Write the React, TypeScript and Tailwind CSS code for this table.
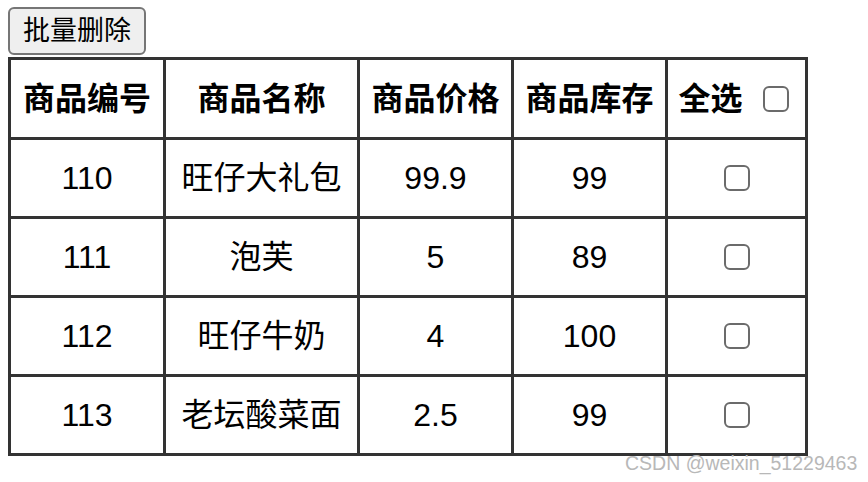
import { useState } from "react"

interface Goods {
  id: number
  name: string
  price: string
  stock: number
}

const initialGoods: Goods[] = [
  { id: 110, name: "旺仔大礼包", price: "99.9", stock: 99 },
  { id: 111, name: "泡芙", price: "5", stock: 89 },
  { id: 112, name: "旺仔牛奶", price: "4", stock: 100 },
  { id: 113, name: "老坛酸菜面", price: "2.5", stock: 99 },
]

function Box({ checked, onChange }: { checked: boolean; onChange: () => void }) {
  return (
    <button
      type="button"
      onClick={onChange}
      className="inline-flex h-[26px] w-[26px] items-center justify-center rounded-[6px] border-2 border-[#6b6b6b] bg-white align-middle"
    >
      {checked && (
        <svg viewBox="0 0 16 16" className="h-4 w-4">
          <path d="M3 8.5l3 3 7-7" fill="none" stroke="#333" strokeWidth="2" />
        </svg>
      )}
    </button>
  )
}

export default function App() {
  const [goods, setGoods] = useState(initialGoods)
  const [selected, setSelected] = useState<number[]>([])

  const allChecked = goods.length > 0 && selected.length === goods.length

  const toggle = (id: number) =>
    setSelected(prev => (prev.includes(id) ? prev.filter(i => i !== id) : [...prev, id]))

  const toggleAll = () => setSelected(allChecked ? [] : goods.map(g => g.id))

  // ===== DELETE =====
  const handleDelete = () => {
    setGoods(prev => prev.filter(g => !selected.includes(g.id)))
    setSelected([])
  }

  const cell = "border-[3px] border-[#333] text-center"

  return (
    <div
      className="relative h-[482px] w-[868px] bg-white pl-[8px] pt-[7px] text-black"
      style={{ fontFamily: '"Liberation Sans", "Noto Sans CJK SC", sans-serif' }}
    >
      <button
        type="button"
        onClick={handleDelete}
        className="block h-[48px] w-[138px] rounded-[6px] border-2 border-[#767676] bg-[#efefef] text-[27px] leading-none"
      >
        批量删除
      </button>

      <table className="mt-[2px] table-fixed border-collapse">
        <colgroup>
          <col className="w-[155px]" />
          <col className="w-[194px]" />
          <col className="w-[154px]" />
          <col className="w-[154px]" />
          <col className="w-[140px]" />
        </colgroup>
        <thead>
          <tr className="h-[80px] text-[32px] font-bold">
            <th className={cell}>商品编号</th>
            <th className={cell}>商品名称</th>
            <th className={cell}>商品价格</th>
            <th className={cell}>商品库存</th>
            <th className={cell}>
              <div className="flex items-center justify-center gap-[20px] pr-[6px]">
                <span>全选</span>
                <Box checked={allChecked} onChange={toggleAll} />
              </div>
            </th>
          </tr>
        </thead>
        <tbody>
          {goods.map(g => (
            <tr key={g.id} className="h-[79px] text-[32px]">
              <td className={cell}>{g.id}</td>
              <td className={cell}>{g.name}</td>
              <td className={cell}>{g.price}</td>
              <td className={cell}>{g.stock}</td>
              <td className={cell}>
                <div className="flex items-center justify-center">
                  <Box checked={selected.includes(g.id)} onChange={() => toggle(g.id)} />
                </div>
              </td>
            </tr>
          ))}
        </tbody>
      </table>

      <span className="absolute left-[625px] top-[449px] text-[19.5px] text-[#b8b8b8]">
        CSDN @weixin_51229463
      </span>
    </div>
  )
}
